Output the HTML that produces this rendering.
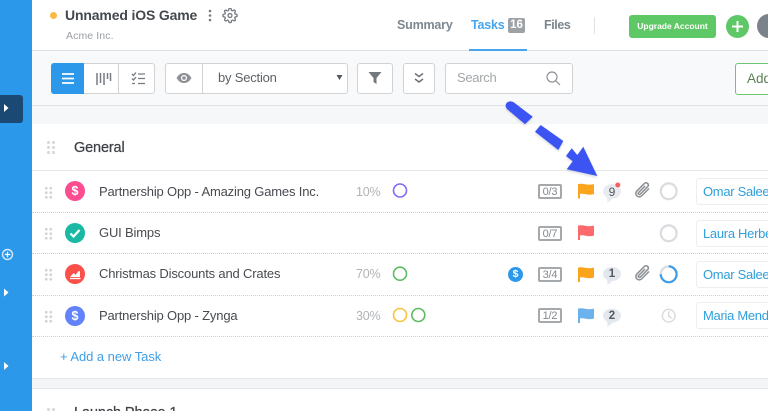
<!DOCTYPE html>
<html><head><meta charset="utf-8">
<style>
html,body{margin:0;padding:0;width:768px;height:411px;overflow:hidden}
body{position:relative;background:#fff;font-family:"Liberation Sans",sans-serif}
#w{position:absolute;left:0;top:0;width:768px;height:411px;overflow:hidden;background:#fff}
.a{position:absolute}
.t{position:absolute;white-space:nowrap;line-height:16px}
.tt{font-size:13px;color:#474b50;letter-spacing:-.17px}
.pc{font-size:12.5px;color:#b0b3b6;letter-spacing:-.2px}
.chk{position:absolute;left:538px;width:20px;height:11px;border:2px solid #a6a9ac;border-radius:2px;font-size:11px;line-height:12px;text-align:center;color:#85898d;letter-spacing:-.2px}
.name{position:absolute;left:696px;width:90px;height:25px;border:1px solid #eceef0;border-radius:3px;font-size:13px;line-height:25px;color:#2e9fdc;text-indent:6px;white-space:nowrap;letter-spacing:-.3px}
.dots{position:absolute;width:9px;height:13.5px;background-image:radial-gradient(circle,#d2d5d8 1.3px,transparent 1.6px);background-size:4.5px 4.5px}
.sd{position:absolute;width:11px;height:15px;background-image:radial-gradient(circle,#d8dbdd 1.5px,transparent 1.8px);background-size:5px 5px}
.ico{position:absolute;left:65px;width:20px;height:20px;border-radius:50%;color:#fff;font-size:12.5px;line-height:20px;text-align:center;font-weight:bold}
.dl{position:absolute;left:32px;width:736px;height:0;border-top:1px dotted #cfd2d5}
.btn{position:absolute;top:63px;height:29px;border:1px solid #d0d2d4;border-radius:3px;background:#fff}
.nav{font-size:12.5px;font-weight:bold;color:#7c8790;top:17px}
</style></head><body><div id="w">

<!-- sidebar -->
<div class="a" style="left:0;top:0;width:32px;height:411px;background:#2c98ea"></div>
<div class="a" style="left:0;top:95px;width:23px;height:28px;background:#1a4a73;border-radius:0 3px 3px 0"></div>
<svg class="a" style="left:0;top:0" width="32" height="411">
<path d="M4 104l4.500 4-4.500 4z" fill="#fff"/>
<path d="M4 288.500l4.500 4-4.500 4z" fill="#fff"/>
<path d="M4 362l4.500 4-4.500 4z" fill="#fff"/>
<circle cx="7.500" cy="254.500" r="5" fill="none" stroke="#d5e9fb" stroke-width="1.400"/>
<path d="M4.800 254.500h5.400M7.500 251.800v5.400" stroke="#fff" stroke-width="1.300"/>
</svg>

<!-- header -->
<div class="a" style="left:32px;top:50px;width:736px;height:1px;background:#dfe2e5"></div>
<div class="a" style="left:50px;top:12px;width:7px;height:7px;border-radius:50%;background:#fbb946"></div>
<div class="t" style="left:65px;top:7px;font-size:14px;color:#44484d;font-weight:bold;letter-spacing:-.15px">Unnamed iOS Game</div>
<div class="t" style="left:66px;top:28px;font-size:10.500px;color:#9a9ea3;letter-spacing:.1px">Acme Inc.</div>
<svg class="a" style="left:205px;top:8px" width="36" height="16">
<g fill="#777c82"><circle cx="5" cy="3" r="1.300"/><circle cx="5" cy="7.500" r="1.300"/><circle cx="5" cy="12" r="1.300"/></g>
<g transform="translate(17.200 -.3) scale(.65)" fill="none" stroke="#737980" stroke-width="2">
<circle cx="12" cy="12" r="3"/>
<path d="M19.400 15a1.650 1.650 0 0 0 .33 1.820l.06.06a2 2 0 0 1 0 2.830 2 2 0 0 1-2.830 0l-.06-.06a1.650 1.650 0 0 0-1.820-.33 1.650 1.650 0 0 0-1 1.510V21a2 2 0 0 1-2 2 2 2 0 0 1-2-2v-.09A1.650 1.650 0 0 0 9 19.400a1.650 1.650 0 0 0-1.820.33l-.06.06a2 2 0 0 1-2.830 0 2 2 0 0 1 0-2.830l.06-.06a1.650 1.650 0 0 0 .33-1.820 1.650 1.650 0 0 0-1.510-1H3a2 2 0 0 1-2-2 2 2 0 0 1 2-2h.09A1.650 1.650 0 0 0 4.600 9a1.650 1.650 0 0 0-.33-1.820l-.06-.06a2 2 0 0 1 0-2.830 2 2 0 0 1 2.830 0l.06.06a1.650 1.650 0 0 0 1.820.33H9a1.650 1.650 0 0 0 1-1.510V3a2 2 0 0 1 2-2 2 2 0 0 1 2 2v.09a1.650 1.650 0 0 0 1 1.510 1.650 1.650 0 0 0 1.820-.33l.06-.06a2 2 0 0 1 2.830 0 2 2 0 0 1 0 2.830l-.06.06a1.650 1.650 0 0 0-.33 1.820V9a1.650 1.650 0 0 0 1.510 1H21a2 2 0 0 1 2 2 2 2 0 0 1-2 2h-.09a1.650 1.650 0 0 0-1.510 1z"/>
</g>
</svg>
<div class="t nav" style="left:397px;letter-spacing:-.2px">Summary</div>
<div class="t nav" style="left:471px;color:#45a6ee;letter-spacing:-.2px">Tasks</div>
<div class="a" style="left:508px;top:18px;width:17px;height:15px;background:#9da2a7;border-radius:2px;color:#fff;font-size:11.500px;font-weight:bold;line-height:15px;text-align:center">16</div>
<div class="t nav" style="left:544px;letter-spacing:-.4px">Files</div>
<div class="a" style="left:469px;top:49px;width:58px;height:2px;background:#45a6ee"></div>
<div class="a" style="left:594px;top:17px;width:1px;height:17px;background:#dfe2e5"></div>
<div class="a" style="left:629px;top:15px;width:87px;height:23px;background:#5fc866;border-radius:3px;color:#fff;font-size:8.500px;font-weight:bold;line-height:22px;text-align:center">Upgrade Account</div>
<div class="a" style="left:726px;top:15px;width:23px;height:23px;border-radius:50%;background:#5fc866"></div>
<svg class="a" style="left:726px;top:15px" width="23" height="23"><path d="M11.500 6v11M6 11.500h11" stroke="#fff" stroke-width="2"/></svg>
<div class="a" style="left:757px;top:14px;width:24px;height:24px;border-radius:50%;background:#7b8289"></div>

<!-- toolbar -->
<div class="a" style="left:32px;top:51px;width:736px;height:54px;background:#f8f9fa"></div>
<div class="a" style="left:32px;top:105px;width:736px;height:1px;background:#e0e2e4"></div>
<div class="a" style="left:32px;top:106px;width:736px;height:18px;background:#f6f7f8"></div>

<div class="btn" style="left:51px;width:102px"></div>
<div class="a" style="left:51px;top:63px;width:33px;height:31px;background:#2c98ea;border-radius:3px 0 0 3px"></div>
<div class="a" style="left:118px;top:64px;width:1px;height:29px;background:#d0d2d4"></div>
<svg class="a" style="left:51px;top:63px" width="104" height="31">
<path d="M11 11h12M11 15.500h12M11 20h12" stroke="#fff" stroke-width="1.800"/>
<path d="M46 10v12M49.500 10v10M53 10v12M56.500 10v6M59.500 10v8" stroke="#777c82" stroke-width="1.500"/>
<path d="M81 11l1.500 1.500 2.500-3M81 15.500l1.500 1.500 2.500-3M81 20.500h3M87 11h7M87 15.500h7M87 20.500h7" stroke="#777c82" stroke-width="1.300" fill="none"/>
</svg>

<div class="btn" style="left:165px;width:181px"></div>
<div class="a" style="left:202px;top:64px;width:1px;height:29px;background:#d0d2d4"></div>
<svg class="a" style="left:176px;top:71px" width="16" height="14"><path d="M.5 7C3 3 5.500 2 8 2s5 1 7.500 5C13 11 10.500 12 8 12S3 11 .5 7z" fill="#8e9296"/><circle cx="8" cy="7" r="3" fill="#fff"/><circle cx="8" cy="7" r="1.800" fill="#8e9296"/></svg>
<div class="t" style="left:218px;top:70px;font-size:13px;color:#5c6167;letter-spacing:-.2px">by Section</div>
<svg class="a" style="left:336px;top:74px" width="8" height="7"><path d="M.5 1h6L3.500 6z" fill="#55595e"/></svg>

<div class="btn" style="left:357px;width:34px"></div>
<svg class="a" style="left:368px;top:71px" width="14" height="14"><path d="M.5 1h13L8.500 7v6l-3-2V7z" fill="#73787d"/></svg>
<div class="btn" style="left:403px;width:30px"></div>
<svg class="a" style="left:414px;top:72px" width="10" height="12" fill="none" stroke="#6d7277" stroke-width="1.500"><path d="M1 1.500l4 3 4-3M1 7l4 3 4-3"/></svg>
<div class="btn" style="left:445px;width:126px"></div>
<div class="t" style="left:457px;top:70px;font-size:13px;color:#a3a6a9;letter-spacing:-.3px">Search</div>
<svg class="a" style="left:546px;top:71px" width="15" height="15" fill="none" stroke="#8e9296" stroke-width="1.200"><circle cx="6" cy="6" r="5"/><path d="M9.800 9.800l4.200 4.200"/></svg>
<div class="a" style="left:735px;top:63px;width:50px;height:30px;border:1px solid #6cc770;border-radius:3px;background:#fff;color:#5b7f52;font-size:13.500px;line-height:30px;text-indent:11px">Add</div>

<!-- section general -->
<div class="a" style="left:32px;top:170px;width:736px;height:1px;background:#e6e8ea"></div>
<div class="sd" style="left:46px;top:140px"></div>
<div class="t" style="left:74px;top:140px;font-size:14.500px;color:#3e4348;letter-spacing:-.15px;-webkit-text-stroke:.25px #3e4348">General</div>

<div class="dl" style="top:212px"></div>
<div class="dl" style="top:253px"></div>
<div class="dl" style="top:295px"></div>
<div class="dl" style="top:336px"></div>

<!-- rows -->
<div class="dots" style="left:44px;top:185.500px"></div>
<div class="ico" style="top:181px;background:#fb4d8f">$</div>
<div class="t tt" style="left:99px;top:184px">Partnership Opp - Amazing Games Inc.</div>
<div class="t pc" style="left:356px;top:184px">10%</div>
<div class="chk" style="top:184px">0/3</div>

<div class="dots" style="left:44px;top:227px"></div>
<div class="ico" style="top:223px;background:#19b9a4"></div>
<svg class="a" style="left:65px;top:223px" width="20" height="20"><path d="M5.500 10.500l3 3 6-6.500" fill="none" stroke="#fff" stroke-width="2.200"/></svg>
<div class="t tt" style="left:99px;top:225px">GUI Bimps</div>
<div class="chk" style="top:226px">0/7</div>

<div class="dots" style="left:44px;top:268px"></div>
<div class="ico" style="top:264px;background:#fb4f4a"></div>
<svg class="a" style="left:65px;top:264px" width="20" height="20"><path d="M5 14.500h10.500" stroke="#fff" stroke-width="1.300"/><path d="M5.500 12.500l3-3.500 2 1.800 3.500-4 1 1V13H5.500z" fill="#fff"/></svg>
<div class="t tt" style="left:99px;top:266px">Christmas Discounts and Crates</div>
<div class="t pc" style="left:356px;top:266px">70%</div>
<div class="a" style="left:508px;top:266.500px;width:15px;height:15px;border-radius:50%;background:#2c98ea;color:#fff;font-size:10.500px;font-weight:bold;line-height:15px;text-align:center">$</div>
<div class="chk" style="top:267px">3/4</div>

<div class="dots" style="left:44px;top:310px"></div>
<div class="ico" style="top:306px;background:#6283fb">$</div>
<div class="t tt" style="left:99px;top:308px">Partnership Opp - Zynga</div>
<div class="t pc" style="left:356px;top:308px">30%</div>
<div class="chk" style="top:308px">1/2</div>

<svg class="a" style="left:390px;top:180px" width="40" height="150" fill="none" stroke-width="1.600">
<circle cx="10" cy="10.500" r="6.500" stroke="#7d6cf5"/>
<circle cx="10" cy="93.700" r="6.500" stroke="#5dbb63"/>
<circle cx="10" cy="135" r="6.500" stroke="#f5c53f"/>
<circle cx="28.300" cy="135" r="6.500" stroke="#5dbb63"/>
</svg>

<svg class="a" style="left:575px;top:180px" width="110" height="150">
<!-- flags -->
<path d="M4 4c5-1 8 2 15 0v10c-6 2-10-1-14 0v4.500H3V4z" fill="#fba51c"/>
<path d="M4 45.500c5-1 8 2 15 0v10c-6 2-10-1-14 0v4.500H3V45.500z" fill="#fc6a6d"/>
<path d="M4 87.500c5-1 8 2 15 0v10c-6 2-10-1-14 0v4.500H3V87.500z" fill="#fba51c"/>
<path d="M4 128.500c5-1 8 2 15 0v10c-6 2-10-1-14 0v4.500H3v-14.500z" fill="#6cb3ee"/>
<!-- paperclips -->
<g fill="none" stroke="#8a8e92" stroke-width="1.500">
<path d="M74 8.500l-7.500 7.500a3.400 3.400 0 0 1-4.800-4.800l8-8a2.300 2.300 0 0 1 3.200 3.200l-7.700 7.700a1.100 1.100 0 0 1-1.600-1.600l6.500-6.500"/>
<path transform="translate(0 83)" d="M74 8.500l-7.500 7.500a3.400 3.400 0 0 1-4.800-4.800l8-8a2.300 2.300 0 0 1 3.200 3.200l-7.700 7.700a1.100 1.100 0 0 1-1.600-1.600l6.500-6.500"/>
</g>
<!-- progress rings -->
<circle cx="93.700" cy="11.300" r="7.900" fill="none" stroke="#d9dcdf" stroke-width="2.200"/>
<circle cx="93.700" cy="53.300" r="7.900" fill="none" stroke="#d9dcdf" stroke-width="2.200"/>
<circle cx="93.700" cy="94.300" r="7.900" fill="none" stroke="#d9dcdf" stroke-width="2.200"/>
<circle cx="93.700" cy="94.300" r="7.900" fill="none" stroke="#3d9cea" stroke-width="2.200" stroke-dasharray="37 50" transform="rotate(-90 93.700 94.300)"/>
<circle cx="93.700" cy="135.700" r="6.300" fill="none" stroke="#d9dcdf" stroke-width="1.500"/>
<path d="M93.700 131.200v5l3 2" fill="none" stroke="#d9dcdf" stroke-width="1.500"/>
<!-- comment bubbles -->
<g fill="#e3e8ee">
<ellipse cx="37" cy="11.500" rx="9" ry="7.500" fill="#e8ecf1"/><path d="M32 16l.5 7 6-5z" fill="#e8ecf1"/>
<ellipse cx="37" cy="94" rx="9" ry="7"/><path d="M32 98l.5 7 6-5z"/>
<ellipse cx="37" cy="135.700" rx="9" ry="7"/><path d="M32 140l.5 7 6-5z"/>
</g>
<circle cx="42.800" cy="5" r="2.500" fill="#fb5f5f"/>
</svg>
<div class="t" style="left:603px;width:18px;text-align:center;top:184px;font-size:12px;color:#55595e">9</div>
<div class="t" style="left:603px;width:18px;text-align:center;top:266px;font-size:11.500px;color:#55595e;font-weight:bold">1</div>
<div class="t" style="left:603px;width:18px;text-align:center;top:308px;font-size:11.500px;color:#55595e;font-weight:bold">2</div>

<div class="name" style="top:178px">Omar Saleem</div>
<div class="name" style="top:220px">Laura Herbert</div>
<div class="name" style="top:261px">Omar Saleem</div>
<div class="name" style="top:302px">Maria Mendez</div>

<div class="t" style="left:60px;top:349px;font-size:13px;color:#3f9fe8;letter-spacing:-.05px">+ Add a new Task</div>

<div class="a" style="left:32px;top:378px;width:736px;height:11px;background:#f4f5f6;border-top:1px solid #e6e8ea;border-bottom:1px solid #e6e8ea;box-sizing:border-box"></div>
<div class="sd" style="left:46px;top:407px"></div>
<div class="t" style="left:74px;top:405px;font-size:14.500px;color:#3e4348;letter-spacing:-.1px;-webkit-text-stroke:.25px #3e4348">Launch Phase 1</div>

<!-- arrow -->
<svg class="a" style="left:490px;top:90px" width="130" height="100">
<defs><filter id="s" x="-20%" y="-20%" width="140%" height="140%"><feGaussianBlur stdDeviation="1.200"/></filter></defs>
<g fill="#8a8e9a" opacity=".35" filter="url(#s)" transform="translate(0 1.500)">
<path d="M17 19C13 14 19 9 24 12.500L42.700 26.700 35 34.300z"/>
<path d="M50.700 35L73.300 51 68.300 60 45 41.700z"/>
<path d="M81.700 58.300L87.300 65 93.300 56.700 107.300 86 76.700 79.300 82.700 71.300 76 66z"/>
</g>
<g fill="#3c55f2">
<path d="M17 19C13 14 19 9 24 12.500L42.700 26.700 35 34.300z"/>
<path d="M50.700 35L73.300 51 68.300 60 45 41.700z"/>
<path d="M81.700 58.300L87.300 65 93.300 56.700 107.300 86 76.700 79.300 82.700 71.300 76 66z"/>
</g>
</svg>
</div></body></html>
